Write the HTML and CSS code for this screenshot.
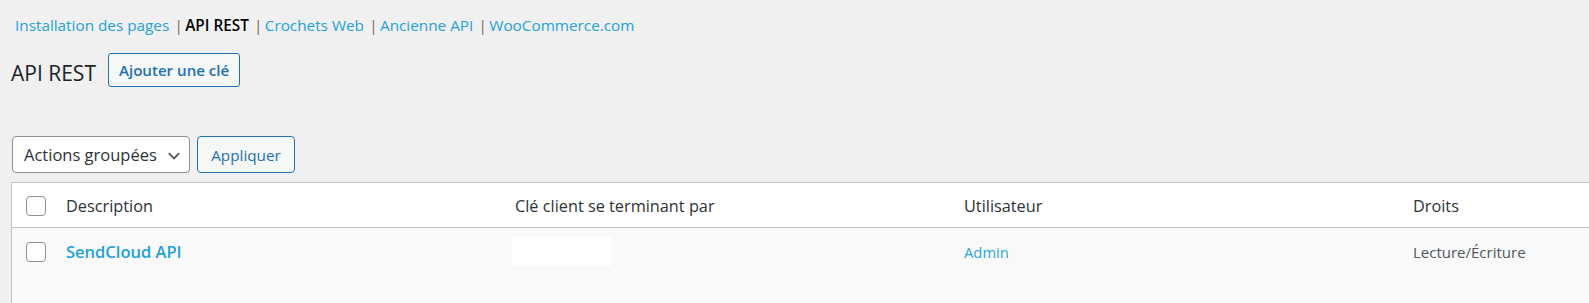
FILE: index.html
```html
<!DOCTYPE html>
<html lang="fr">
<head>
<meta charset="utf-8">
<title>API REST</title>
<link rel="stylesheet" href="styles.css">
</head>
<body>
<div class="wrap">
  <ul class="subsubsub">
    <li><a href="#">Installation des pages</a><span class="sep">|</span></li>
    <li><a href="#" class="current">API REST</a><span class="sep">|</span></li>
    <li><a href="#">Crochets Web</a><span class="sep">|</span></li>
    <li><a href="#">Ancienne API</a><span class="sep">|</span></li>
    <li><a href="#">WooCommerce.com</a></li>
  </ul>
  <div class="heading">
    <h1 class="title">API REST</h1>
    <a href="#" class="add-btn">Ajouter une clé</a>
  </div>
  <div class="tablenav">
    <div class="select">
      <span>Actions groupées</span>
      <svg class="chev" width="14" height="10" viewBox="0 0 14 10"><path d="M1.8 2.2 L7 7.4 L12.2 2.2" fill="none" stroke="#50575e" stroke-width="1.8"/></svg>
    </div>
    <button class="apply">Appliquer</button>
  </div>
  <div class="table">
    <div class="row head">
      <div class="cb"><span class="box"></span></div>
      <div class="col c1">Description</div>
      <div class="col c2">Clé client se terminant par</div>
      <div class="col c3">Utilisateur</div>
      <div class="col c4">Droits</div>
    </div>
    <div class="row body">
      <div class="cb"><span class="box"></span></div>
      <div class="col c1"><a href="#" class="name">SendCloud API</a></div>
      <div class="col c2"><span class="masked"></span></div>
      <div class="col c3"><a href="#" class="user">Admin</a></div>
      <div class="col c4 perm">Lecture/Écriture</div>
    </div>
  </div>
</div>
</body>
</html>
```
FILE: styles.css
```css
* { box-sizing: border-box; }
html, body { margin: 0; padding: 0; }
body {
  background: #f0f0f1;
  font-family: "Open Sans", "Noto Sans", sans-serif;
  color: #1d2327;
  width: 1589px;
  height: 303px;
  overflow: hidden;
}
.wrap { padding: 0 0 0 11px; }
a { text-decoration: none; }

.subsubsub {
  list-style: none;
  margin: 0;
  padding: 15px 0 0 4px;
  display: flex;
  font-size: 15.3px;
  line-height: 20px;
}
.subsubsub li { display: flex; }
.subsubsub a { color: #25a2d8; }
.subsubsub a.current { color: #000; font-weight: 600; }
.subsubsub .sep {
  color: #7d6a58;
  display: inline-block;
  width: 16px;
  text-align: center;
  padding-left: 3px;
}

.heading {
  display: flex;
  align-items: flex-start;
  margin-top: 18px;
  height: 34px;
}
.title {
  margin: 0;
  padding-top: 3px;
  font-size: 21px;
  line-height: 34px;
  font-weight: 500;
  color: #1d2327;
}
.add-btn {
  margin-left: 12px;
  height: 34px;
  padding: 0 10px;
  display: flex;
  align-items: center;
  border: 1px solid #2271b1;
  border-radius: 3px;
  background: #f6f7f7;
  color: #2271b1;
  font-size: 15.1px;
  font-weight: 600;
}

.tablenav {
  display: flex;
  gap: 7px;
  margin-top: 49px;
  padding-left: 1px;
}
.select {
  width: 178px;
  height: 37px;
  border: 1px solid #8c8f94;
  border-radius: 4px;
  background: #fff;
  display: flex;
  align-items: center;
  justify-content: space-between;
  padding: 0 8px 0 11px;
  font-size: 16.5px;
  color: #2c3338;
}
.chev { margin-top: 2px; }
.apply {
  height: 37px;
  width: 98px;
  border: 1px solid #2271b1;
  border-radius: 4px;
  background: #f6f7f7;
  color: #2271b1;
  font-family: inherit;
  font-size: 15.3px;
  padding: 0;
}

.table {
  margin-top: 9px;
  border: 1px solid #c3c4c7;
  border-right: none;
  border-bottom: none;
}
.row { display: flex; align-items: center; }
.row.head {
  background: #fff;
  height: 45px;
  padding-top: 1px;
  border-bottom: 1px solid #c3c4c7;
  font-size: 16.3px;
  color: #2c3338;
}
.row.body {
  background: #f9f9f9;
  height: 80px;
  align-items: flex-start;
  padding-top: 9px;
}
.cb { width: 54px; padding-left: 14px; display: flex; align-items: center; }
.box {
  width: 20px;
  height: 20px;
  border: 1px solid #8c8f94;
  border-radius: 4px;
  background: #fff;
  display: block;
}
.body .cb, .body .col { height: 29px; display: flex; align-items: center; }
.c1, .c2, .c3 { width: 449px; flex: none; }
.c4 { flex: 1; }
.name {
  color: #1ea1d6;
  font-weight: 600;
  font-size: 16.5px;
}
.masked {
  display: block;
  width: 99px;
  height: 29px;
  background: #fff;
  margin-left: -3px;
}
.user { color: #2ea6dc; font-size: 14.8px; }
.perm { font-size: 15px; color: #50575e; }
```
